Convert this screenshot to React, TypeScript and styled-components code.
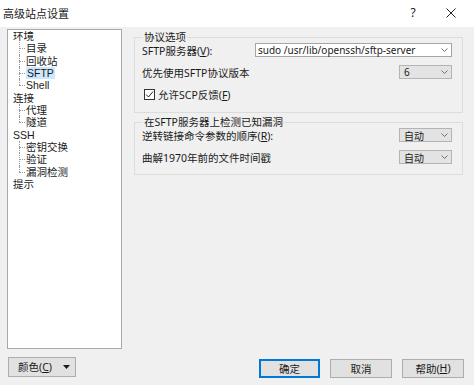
import React from "react";
import styled, { createGlobalStyle } from "styled-components";

const Global = createGlobalStyle`
  html, body { margin: 0; padding: 0; background: #f0f0f0; overflow: hidden; }
  * { box-sizing: border-box; }
`;

const FONT = `"Noto Sans", "Noto Sans CJK SC", sans-serif`;

const Window = styled.div`
  width: 474px;
  height: 387px;
  display: flex;
  flex-direction: column;
  background: #f0f0f0;
  font-family: ${FONT};
  font-size: 10.5px;
  color: #1a1a1a;
`;

const TitleBar = styled.div`
  height: 27px;
  flex: none;
  background: #ffffff;
  display: flex;
  align-items: center;
  padding: 0 0 2px 3px;
  font-size: 11px;
`;

const Title = styled.div`
  flex: 1;
`;

const TitleButton = styled.div<{ $w: number }>`
  width: ${(p) => p.$w}px;
  display: flex;
  justify-content: center;
  font-size: 12px;
  color: #222;
`;

const Content = styled.div`
  height: 322px;
  flex: none;
  display: flex;
  padding: 2px 11px 0 7px;
  gap: 12px;
`;

const Tree = styled.div`
  width: 115px;
  height: 320px;
  background: #fff;
  border: 1px solid #a9a9a9;
  padding: 0 0 0 5px;
  font-family: "Liberation Sans", "Noto Sans CJK SC", sans-serif;
  font-size: 10.5px;
  line-height: 12.33px;
`;

const TreeItem = styled.div`
  height: 12.33px;
  white-space: nowrap;
`;

const ChildItem = styled.div<{ $last?: boolean }>`
  position: relative;
  height: 12.33px;
  padding-left: 13px;
  white-space: nowrap;
  &::before {
    content: "";
    position: absolute;
    left: 6px;
    top: 0;
    height: ${(p) => (p.$last ? "6px" : "12.33px")};
    border-left: 1px dotted #9a9a9a;
  }
  &::after {
    content: "";
    position: absolute;
    left: 6px;
    top: 6px;
    width: 6px;
    border-top: 1px dotted #9a9a9a;
  }
`;

const Selected = styled.span`
  background: #cce8ff;
  padding: 0 1px;
`;

const RightPanel = styled.div`
  width: 329px;
  display: flex;
  flex-direction: column;
  gap: 3px;
  padding-top: 2px;
`;

const Group = styled.fieldset<{ $pb: number }>`
  margin: 0;
  padding: 0 10px ${(p) => p.$pb}px 7px;
  border: 1px solid #dcdcdc;
  border-radius: 0;
  min-width: 0;
`;

const Legend = styled.legend`
  padding: 0 1px;
  margin-left: 1px;
  line-height: 12px;
  font-size: 10.5px;
`;

const Rows = styled.div<{ $gap: number }>`
  display: flex;
  flex-direction: column;
  gap: ${(p) => p.$gap}px;
`;

const Row = styled.div`
  display: flex;
  align-items: center;
  justify-content: space-between;
  height: 14px;
`;

const Label = styled.span`
  white-space: nowrap;
`;

const Key = styled.span`
  text-decoration: underline;
`;

const Combo = styled.div`
  width: 197px;
  height: 14px;
  background: #fff;
  border: 1px solid #a5a5a5;
  display: flex;
  align-items: center;
  padding: 0 0 0 2px;
  font-size: 10px;
  white-space: nowrap;
`;

const Select = styled.div`
  width: 53px;
  height: 14px;
  background: #e3e3e3;
  border: 1px solid #b4b4b4;
  display: flex;
  align-items: center;
  padding-left: 4px;
  font-size: 10px;
`;

const Value = styled.span`
  flex: 1;
  overflow: hidden;
`;

const ChevronBox = styled.span`
  width: 14px;
  display: flex;
  justify-content: center;
  align-items: center;
`;

const Chevron = () => (
  <ChevronBox>
    <svg width="7" height="4" viewBox="0 0 7 4">
      <polyline points="0.5,0.5 3.5,3.5 6.5,0.5" fill="none" stroke="#707070" strokeWidth="1" />
    </svg>
  </ChevronBox>
);

const CheckRow = styled.label`
  display: flex;
  align-items: center;
  gap: 3px;
  height: 14px;
  margin-left: 2px;
`;

const CheckBox = styled.span`
  width: 11px;
  height: 11px;
  border: 1px solid #333;
  background: #fff;
  display: flex;
  align-items: center;
  justify-content: center;
`;

const Footer = styled.div`
  height: 36px;
  flex: none;
  display: flex;
  align-items: center;
  padding: 2px 10px 0 8px;
`;

const Button = styled.div<{ $w: number; $default?: boolean }>`
  width: ${(p) => p.$w}px;
  height: 19px;
  background: #e1e1e1;
  border: 1px solid ${(p) => (p.$default ? "#0078d7" : "#adadad")};
  box-shadow: ${(p) => (p.$default ? "inset 0 0 0 1px #0078d7" : "none")};
  display: flex;
  align-items: center;
  justify-content: center;
  font-size: 10.5px;
  white-space: nowrap;
`;

const ColorButton = styled(Button)`
  justify-content: flex-start;
  padding-left: 9px;
  height: 20px;
  margin-top: -3px;
`;

const ColorText = styled.span`
  flex: 1;
`;

const Arrow = styled.span`
  width: 18px;
  display: flex;
  justify-content: center;
`;

const Spacer = styled.div`
  flex: 1;
`;

const Buttons = styled.div`
  display: flex;
  gap: 10px;
`;

const BottomStrip = styled.div`
  height: 2px;
  flex: none;
  background: #ffffff;
`;

export default function App() {
  return (
    <Window>
      <Global />
      <TitleBar>
        <Title>高级站点设置</Title>
        <TitleButton $w={30}>?</TitleButton>
        <TitleButton $w={46}>
          <svg width="10" height="10" viewBox="0 0 10 10">
            <path d="M0.5 0.5 L9.5 9.5 M9.5 0.5 L0.5 9.5" stroke="#222" strokeWidth="1" />
          </svg>
        </TitleButton>
      </TitleBar>
      <Content>
        <Tree>
          <TreeItem>环境</TreeItem>
          <ChildItem>目录</ChildItem>
          <ChildItem>回收站</ChildItem>
          <ChildItem>
            <Selected>SFTP</Selected>
          </ChildItem>
          <ChildItem $last>Shell</ChildItem>
          <TreeItem>连接</TreeItem>
          <ChildItem>代理</ChildItem>
          <ChildItem $last>隧道</ChildItem>
          <TreeItem>SSH</TreeItem>
          <ChildItem>密钥交换</ChildItem>
          <ChildItem>验证</ChildItem>
          <ChildItem $last>漏洞检测</ChildItem>
          <TreeItem>提示</TreeItem>
        </Tree>
        <RightPanel>
          <Group $pb={11}>
            <Legend>协议选项</Legend>
            <Rows $gap={8}>
              <Row>
                <Label>
                  SFTP服务器(<Key>V</Key>):
                </Label>
                <Combo>
                  <Value>sudo /usr/lib/openssh/sftp-server</Value>
                  <Chevron />
                </Combo>
              </Row>
              <Row>
                <Label>优先使用SFTP协议版本</Label>
                <Select>
                  <Value>6</Value>
                  <Chevron />
                </Select>
              </Row>
              <CheckRow>
                <CheckBox>
                  <svg width="9" height="9" viewBox="0 0 9 9">
                    <polyline points="1,4.5 3.5,7 8,1.5" fill="none" stroke="#222" strokeWidth="1" />
                  </svg>
                </CheckBox>
                <Label>
                  允许SCP反馈(<Key>F</Key>)
                </Label>
              </CheckRow>
            </Rows>
          </Group>
          <Group $pb={10}>
            <Legend>在SFTP服务器上检测已知漏洞</Legend>
            <Rows $gap={8}>
              <Row>
                <Label>
                  逆转链接命令参数的顺序(<Key>R</Key>):
                </Label>
                <Select>
                  <Value>自动</Value>
                  <Chevron />
                </Select>
              </Row>
              <Row>
                <Label>曲解1970年前的文件时间戳</Label>
                <Select>
                  <Value>自动</Value>
                  <Chevron />
                </Select>
              </Row>
            </Rows>
          </Group>
        </RightPanel>
      </Content>
      <Footer>
        <ColorButton $w={68}>
          <ColorText>
            颜色(<Key>C</Key>)
          </ColorText>
          <Arrow>
            <svg width="7" height="4" viewBox="0 0 7 4">
              <polygon points="0,0 7,0 3.5,4" fill="#1a1a1a" />
            </svg>
          </Arrow>
        </ColorButton>
        <Spacer />
        <Buttons>
          <Button $w={61} $default>
            确定
          </Button>
          <Button $w={62}>取消</Button>
          <Button $w={62}>
            帮助(<Key>H</Key>)
          </Button>
        </Buttons>
      </Footer>
      <BottomStrip />
    </Window>
  );
}
